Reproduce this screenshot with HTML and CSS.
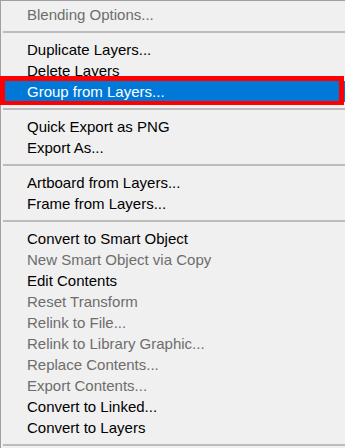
FILE: index.html
```html
<!DOCTYPE html>
<html>
<head>
<meta charset="utf-8">
<link rel="stylesheet" href="styles.css">
</head>
<body>
<div class="menu">
  <div class="item disabled">Blending Options...</div>
  <div class="sep"></div>
  <div class="item">Duplicate Layers...</div>
  <div class="item">Delete Layers</div>
  <div class="item active">Group from Layers...</div>
  <div class="sep"></div>
  <div class="item">Quick Export as PNG</div>
  <div class="item">Export As...</div>
  <div class="sep"></div>
  <div class="item">Artboard from Layers...</div>
  <div class="item">Frame from Layers...</div>
  <div class="sep"></div>
  <div class="item">Convert to Smart Object</div>
  <div class="item disabled">New Smart Object via Copy</div>
  <div class="item">Edit Contents</div>
  <div class="item disabled">Reset Transform</div>
  <div class="item disabled">Relink to File...</div>
  <div class="item disabled">Relink to Library Graphic...</div>
  <div class="item disabled">Replace Contents...</div>
  <div class="item disabled">Export Contents...</div>
  <div class="item">Convert to Linked...</div>
  <div class="item">Convert to Layers</div>
  <div class="sep"></div>
</div>
</body>
</html>
```

FILE: styles.css
```css
html, body {
  margin: 0;
  padding: 0;
  background: #f0f0f0;
  overflow: hidden;
}

.menu {
  position: relative;
  display: flex;
  flex-direction: column;
  box-sizing: border-box;
  height: 448px;
  padding-top: 3px;
  background: #f0f0f0;
  border-top: 1px solid #a0a0a0;
  border-left: 1px solid #a0a0a0;
  font-family: "Liberation Sans", Arial, sans-serif;
  font-size: 15px;
  color: #000;
}

.item {
  position: relative;
  flex: none;
  height: 21px;
  line-height: 21px;
  padding-left: 25px;
  margin-left: 1px;
  white-space: nowrap;
}

.item.disabled {
  color: #6d6d6d;
}

.item.active {
  background: #0078d7;
  color: #fff;
}

.item.active::after {
  content: "";
  position: absolute;
  left: -2px;
  right: 1px;
  top: -5px;
  bottom: -3px;
  border-style: solid;
  border-color: #ff0000;
  border-width: 5px 5px 4px 5px;
}

.sep {
  flex: none;
  height: 2px;
  margin: 6px 0 6px 2px;
  background: #bcbcbc;
}
```
